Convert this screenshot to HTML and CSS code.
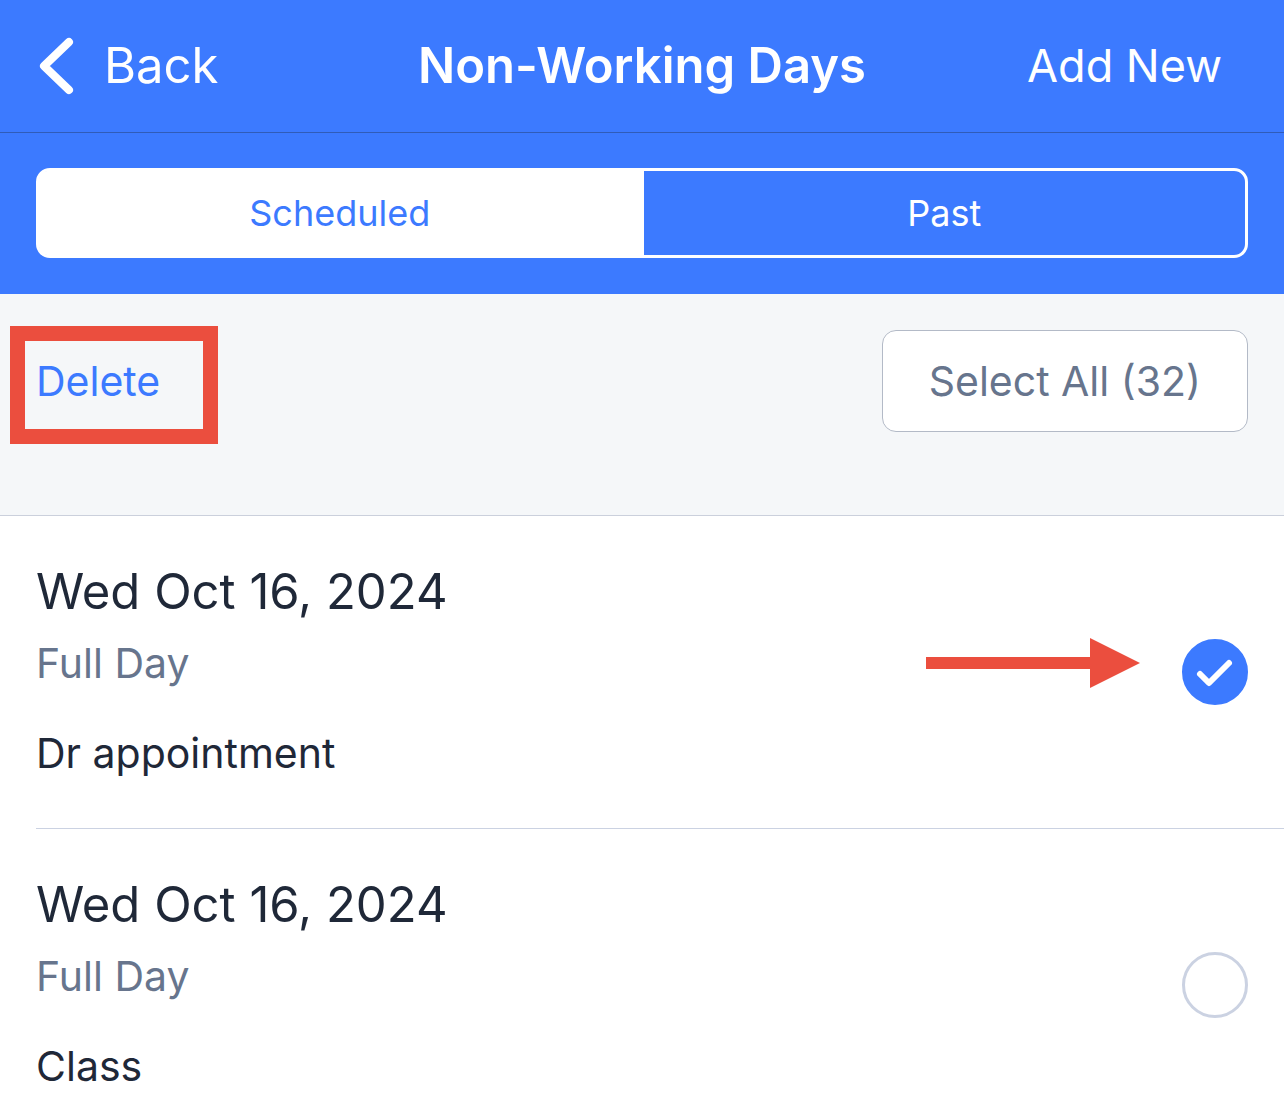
FILE: index.html
```html
<!DOCTYPE html>
<html lang="en">
<head>
<meta charset="utf-8">
<meta name="viewport" content="width=device-width, initial-scale=1">
<title>Non-Working Days</title>
<link rel="stylesheet" href="styles.css">
</head>
<body>
<header class="header">
  <nav class="navbar">
    <a class="back" href="#">
      <svg class="back-icon" viewBox="0 0 38 58" aria-hidden="true"><path d="M33 5 8 29l25 24"/></svg>
      <span>Back</span>
    </a>
    <h1 class="title">Non-Working Days</h1>
    <a class="add" href="#">Add New</a>
  </nav>
  <div class="segments">
    <button class="segment active" type="button">Scheduled</button>
    <button class="segment" type="button">Past</button>
  </div>
</header>
<main>
  <div class="toolbar">
    <div class="delete-wrap">
      <button class="delete" type="button">Delete</button>
      <span class="highlight"></span>
    </div>
    <button class="select-all" type="button">Select All (32)</button>
  </div>
  <ul class="days">
    <li class="day">
      <label class="info" for="day-1">
        <span class="date">Wed Oct 16, 2024</span>
        <span class="duration">Full Day</span>
        <span class="note">Dr appointment</span>
      </label>
      <div class="pick">
        <svg class="arrow" viewBox="0 0 214 50" aria-hidden="true"><path d="M0 19h164V0l50 25-50 25V31H0z"/></svg>
        <input class="check" id="day-1" type="checkbox" checked>
        <svg class="tick" viewBox="0 0 66 66" aria-hidden="true"><path d="M18 35l9 9 20-20"/></svg>
      </div>
    </li>
    <li class="day">
      <label class="info" for="day-2">
        <span class="date">Wed Oct 16, 2024</span>
        <span class="duration">Full Day</span>
        <span class="note">Class</span>
      </label>
      <div class="pick">
        <input class="check" id="day-2" type="checkbox">
      </div>
    </li>
  </ul>
</main>
</body>
</html>
```

FILE: styles.css
```css
* { box-sizing: border-box; }
body {
  margin: 0;
  background: #fff;
  color: #1f2838;
  font-family: Inter, "Liberation Sans", sans-serif;
}
button { margin: 0; padding: 0; border: 0; background: none; font: inherit; cursor: pointer; }
a { color: inherit; text-decoration: none; }

/* Header */
.header { padding-bottom: 36px; background: #3c7aff; color: #fff; }
.navbar {
  display: grid;
  grid-template-columns: 1fr auto 1fr;
  align-items: center;
  height: 133px;
  margin-bottom: 35px;
  padding: 0 36px;
  border-bottom: 1px solid #305cb8;
}
.back { display: flex; align-items: center; gap: 30px; font-size: 49px; line-height: 60px; }
.back-icon {
  width: 38px;
  height: 58px;
  fill: none;
  stroke: #fff;
  stroke-width: 8;
  stroke-linecap: round;
  stroke-linejoin: round;
}
.title { margin: 0; font-size: 49px; line-height: 60px; font-weight: 600; }
.add { justify-self: end; padding-right: 26px; font-size: 45px; line-height: 60px; }
.segments {
  display: flex;
  margin: 0 36px;
  border: 3px solid #fff;
  border-radius: 14px;
}
.segment { flex: 1; height: 84px; color: #fff; font-size: 36px; }
.segment.active {
  border-right: 3px solid #fff;
  border-radius: 8px 0 0 8px;
  background: #fff;
  color: #3c7aff;
}

/* Bulk actions */
.toolbar {
  display: flex;
  justify-content: space-between;
  align-items: flex-start;
  padding: 36px 36px 83px;
  border-bottom: 1px solid #cbd0dc;
  background: #f5f7f9;
}
.delete-wrap { position: relative; }
.delete { height: 102px; color: #3c7aff; font-size: 41px; }
.highlight {
  position: absolute;
  top: -4px;
  left: -26px;
  width: 208px;
  height: 118px;
  border: 15px solid #eb4e3e;
  pointer-events: none;
}
.select-all {
  height: 102px;
  padding: 0 46px;
  border: 1px solid #b3bac7;
  border-radius: 14px;
  background: #fff;
  color: #67758d;
  font-size: 41px;
}

/* Day list */
.days { margin: 0; padding: 0 0 0 36px; list-style: none; }
.day {
  display: flex;
  justify-content: space-between;
  align-items: center;
  padding-right: 36px;
  border-bottom: 1px solid #cbd2e2;
}
.info { display: grid; padding: 44px 0 47px; }
.date { font-size: 49px; line-height: 64px; }
.duration { margin-top: 11px; color: #67758d; font-size: 41px; line-height: 56px; }
.note { margin-top: 34px; font-size: 41px; line-height: 56px; }
.pick { position: relative; }
.check {
  display: block;
  appearance: none;
  width: 66px;
  height: 66px;
  margin: 0;
  border: 3px solid #cbd2e2;
  border-radius: 50%;
  background: #fff;
}
.check:checked { border-color: #3c7aff; background: #3c7aff; }
.tick {
  position: absolute;
  inset: 0;
  width: 66px;
  height: 66px;
  fill: none;
  stroke: #fff;
  stroke-width: 6;
  stroke-linecap: round;
  stroke-linejoin: round;
  pointer-events: none;
}
.arrow { position: absolute; top: -1px; right: 108px; width: 214px; height: 50px; fill: #eb4e3e; }
```
